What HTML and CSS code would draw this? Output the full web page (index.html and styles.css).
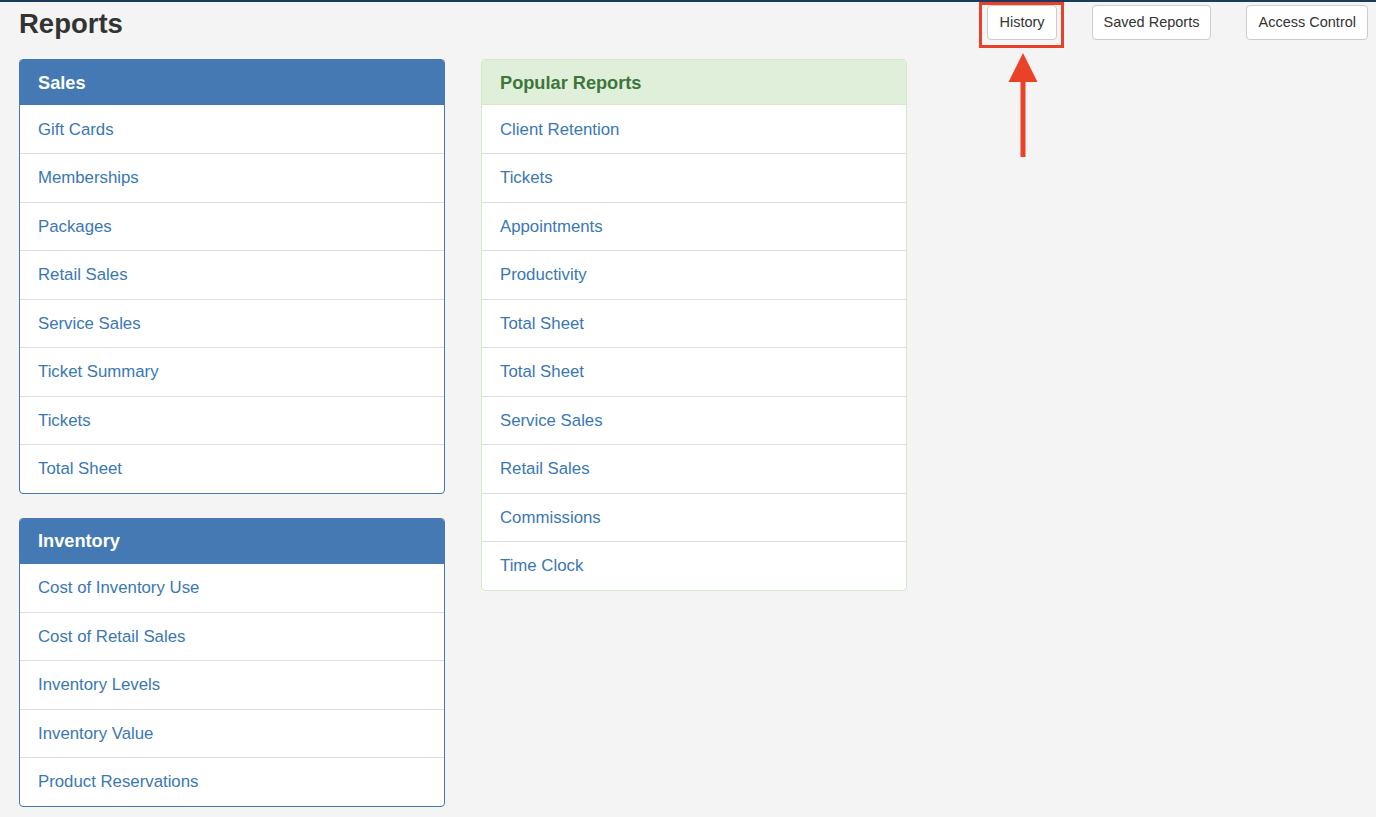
FILE: index.html
```html
<!DOCTYPE html>
<html lang="en">
<head>
<meta charset="utf-8">
<title>Reports</title>
<link rel="stylesheet" href="styles.css">
</head>
<body>
<div class="topbar">
  <h1 class="title">Reports</h1>
  <div class="actions">
    <button class="btn">History</button>
    <button class="btn">Saved Reports</button>
    <button class="btn">Access Control</button>
  </div>
</div>

<div class="highlight"></div>
<svg class="arrow" width="40" height="110" viewBox="0 0 40 110">
  <polygon points="15,0 29.5,29 0.5,29" fill="#ea4229"/>
  <rect x="12.5" y="27" width="5" height="77" fill="#ea4229"/>
</svg>

<div class="columns">
  <div class="col">
    <div class="panel panel-primary">
      <div class="panel-heading">Sales</div>
      <div class="list">
        <a class="item">Gift Cards</a>
        <a class="item">Memberships</a>
        <a class="item">Packages</a>
        <a class="item">Retail Sales</a>
        <a class="item">Service Sales</a>
        <a class="item">Ticket Summary</a>
        <a class="item">Tickets</a>
        <a class="item">Total Sheet</a>
      </div>
    </div>
    <div class="panel panel-primary">
      <div class="panel-heading">Inventory</div>
      <div class="list">
        <a class="item">Cost of Inventory Use</a>
        <a class="item">Cost of Retail Sales</a>
        <a class="item">Inventory Levels</a>
        <a class="item">Inventory Value</a>
        <a class="item">Product Reservations</a>
      </div>
    </div>
  </div>
  <div class="col">
    <div class="panel panel-success">
      <div class="panel-heading">Popular Reports</div>
      <div class="list">
        <a class="item">Client Retention</a>
        <a class="item">Tickets</a>
        <a class="item">Appointments</a>
        <a class="item">Productivity</a>
        <a class="item">Total Sheet</a>
        <a class="item">Total Sheet</a>
        <a class="item">Service Sales</a>
        <a class="item">Retail Sales</a>
        <a class="item">Commissions</a>
        <a class="item">Time Clock</a>
      </div>
    </div>
  </div>
</div>
</body>
</html>
```

FILE: styles.css
```css
* { box-sizing: border-box; }

html, body {
  margin: 0;
  padding: 0;
}

body {
  background: #f4f4f4;
  border-top: 2px solid #1d3a5c;
  font-family: "Liberation Sans", Arial, Helvetica, sans-serif;
  color: #333;
  min-height: 817px;
  position: relative;
}

.topbar {
  display: flex;
  justify-content: space-between;
  align-items: flex-start;
  height: 57px;
  padding: 0 8px 0 19px;
}

.title {
  margin: 5px 0 0 0;
  font-size: 27.5px;
  line-height: 33px;
  font-weight: bold;
  color: #333;
}

.actions {
  display: flex;
  gap: 35px;
  margin-top: 3px;
}

.btn {
  font-family: "Liberation Sans", Arial, Helvetica, sans-serif;
  font-size: 14.5px;
  line-height: 21px;
  padding: 6px 11px;
  background: #fff;
  color: #333;
  border: 1px solid #ccc;
  border-radius: 4px;
  height: 35px;
}

.highlight {
  position: absolute;
  left: 979px;
  top: 0px;
  width: 85px;
  height: 46px;
  border: 3px solid #e8412b;
}

.arrow {
  position: absolute;
  left: 1008px;
  top: 51px;
}

.columns {
  display: grid;
  grid-template-columns: 426px 426px;
  column-gap: 36px;
  padding-left: 19px;
  align-items: start;
}

.col {
  display: flex;
  flex-direction: column;
  gap: 24px;
}

.panel {
  background: #fff;
  border: 1px solid #4479b2;
  border-radius: 4px;
  overflow: hidden;
}

.panel-heading {
  padding: 10.5px 18px;
  font-size: 18.2px;
  line-height: 24px;
  font-weight: bold;
}

.panel-primary .panel-heading {
  background: #4479b3;
  color: #fff;
}

.panel-success {
  border-color: #d6e9c6;
}

.panel-success .panel-heading {
  background: #e0efd9;
  color: #3c763d;
  border-bottom: 1px solid #d6e9c6;
  padding-bottom: 9.5px;
}

.list {
  display: flex;
  flex-direction: column;
}

.item {
  display: block;
  padding: 12px 18px;
  font-size: 16.8px;
  line-height: 23.5px;
  color: #3a77b5;
  text-decoration: none;
  border-top: 1px solid #dddddd;
}

.item:first-child {
  border-top: none;
  padding-top: 12.5px;
}
```
